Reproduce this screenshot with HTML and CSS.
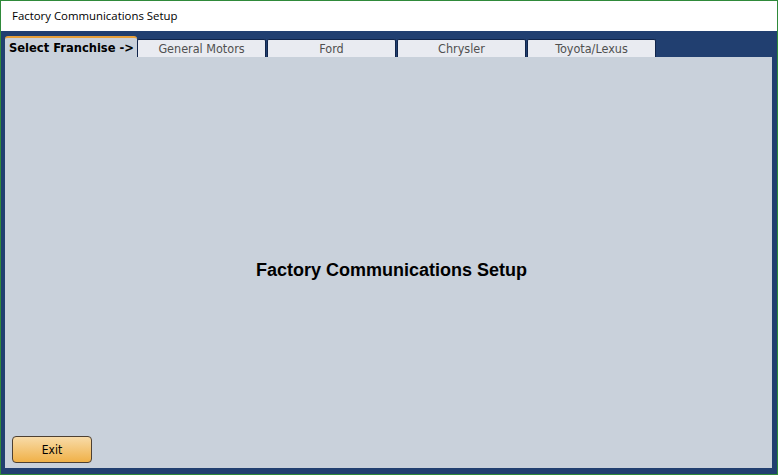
FILE: index.html
```html
<!DOCTYPE html>
<html>
<head>
<meta charset="utf-8">
<link rel="stylesheet" href="styles.css">
</head>
<body>
<div class="window">
  <div class="titlebar">Factory Communications Setup</div>
  <div class="frame">
    <div class="tabs">
      <div class="tab active">Select Franchise -&gt;</div>
      <div class="tab">General Motors</div>
      <div class="tab">Ford</div>
      <div class="tab">Chrysler</div>
      <div class="tab">Toyota/Lexus</div>
    </div>
    <div class="panel">
      <div class="message">Factory Communications Setup</div>
      <div class="footer"><button class="exit">Exit</button></div>
    </div>
  </div>
</div>
</body>
</html>
```
FILE: styles.css
```css
html, body { margin: 0; padding: 0; background: #ffffff; }
.window {
  width: 778px; height: 475px; box-sizing: border-box;
  border: 1px solid #2f8a3a;
  display: flex; flex-direction: column;
  background: #213f70;
}
.titlebar {
  height: 30px; background: #ffffff;
  font-family: "Open Sans", "Noto Sans", sans-serif; font-size: 11.4px; color: #000;
  padding-left: 11px; line-height: 30px; box-sizing: border-box;
}
.frame {
  flex: 1; display: flex; flex-direction: column;
  padding: 0 5px 6px 4px;
  background: #213f70;
}
.tabs { height: 26px; display: flex; align-items: flex-end; }
.tab {
  width: 129px; height: 18px; box-sizing: border-box;
  margin-right: 1px;
  background: #e9ebf1; border: 1px solid #10244a; border-bottom: none;
  border-radius: 2px 2px 0 0;
  font-family: "DejaVu Sans Condensed", "DejaVu Sans", sans-serif; font-size: 12.5px;
  color: #505050; text-align: center; line-height: 18px;
}
.tab.active {
  width: 132px; height: 21px; margin-right: 0;
  background: #c9d1db; border: none; border-top: 2px solid #e8a03a;
  border-radius: 3px 3px 0 0;
  font-family: "DejaVu Sans Condensed", "DejaVu Sans", sans-serif; font-weight: bold; font-size: 12.8px;
  color: #000; text-align: left; padding-left: 4px; line-height: 19px;
}
.panel {
  flex: 1; background: #c9d1db; display: flex; flex-direction: column;
}
.message {
  flex: 1; display: flex; align-items: center; justify-content: center;
  padding-top: 47px; padding-left: 6px;
  font-family: "Liberation Sans", Arial, sans-serif; font-weight: bold; font-size: 18px; color: #000;
}
.footer { padding: 0 0 5px 7px; }
.exit {
  width: 80px; height: 27px; box-sizing: border-box;
  border: 1px solid #4d4032; border-radius: 4px;
  background: linear-gradient(#f8dba8, #f0b148);
  font-family: "DejaVu Sans Condensed", "DejaVu Sans", sans-serif; font-size: 12px; color: #000;
  padding: 0; display: block;
}
```
